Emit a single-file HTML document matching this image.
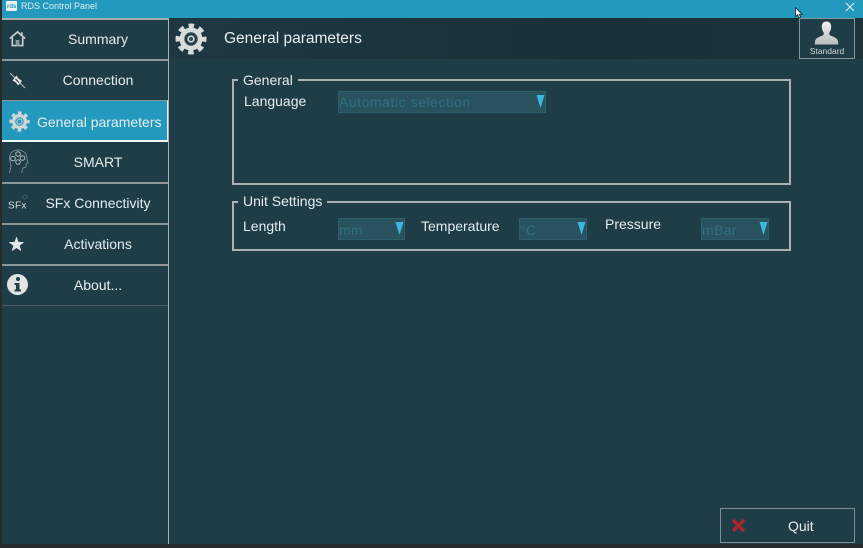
<!DOCTYPE html>
<html><head><meta charset="utf-8"><style>
html,body{margin:0;padding:0;width:863px;height:548px;overflow:hidden;background:#262b2d}
body{position:relative;font-family:"Liberation Sans",sans-serif}
div,span,svg{position:absolute;display:block}
.t{white-space:nowrap;color:#e6eced;font-size:14px;line-height:16px}
.c{text-align:center}
.sep{left:2px;width:166px;height:2px;background:#8d9799}
.dd{background:#28525e;border:1px solid #2c5e6b;box-sizing:border-box;height:22px}
.dd span{color:#316f80;font-size:14px;line-height:16px;left:0;top:3px;white-space:nowrap;letter-spacing:.3px}
.dd svg{right:0;top:3px}
.box{border:2px solid #aab2b4;box-sizing:border-box}
.leg{background:#1f3d47;padding:0 5px;color:#e6eced;font-size:14px;line-height:16px;white-space:nowrap}
</style></head><body>
<div style="left:2px;top:0;width:861px;height:544px;background:#1f3d47"></div>
<div style="left:2px;top:0;width:861px;height:18px;background:#2399bd"></div>
<div style="left:6px;top:1px;width:11px;height:10px;background:#eef3f5;border-radius:1px"></div>
<div style="left:7px;top:4px;font-size:6px;line-height:6px;font-weight:bold;color:#2399bd">rds</div>
<div class="t" style="left:21px;top:0;font-size:9px;line-height:13px;color:#dcecf2">RDS Control Panel</div>
<svg style="left:845px;top:2px" width="10" height="10" viewBox="0 0 10 10"><path d="M1 1L9 9M9 1L1 9" stroke="#e8f3f7" stroke-width="1"/></svg>

<!-- header -->
<div style="left:169px;top:18px;width:694px;height:41px;background:linear-gradient(90deg,#1e3842,#1a3038 60%,#1c333b)"></div>
<svg style="left:175px;top:23px" width="32" height="32" viewBox="0 0 32 32">
<circle cx="16" cy="16" r="13" fill="none" stroke="#d8dbdb" stroke-width="5" stroke-dasharray="5.4 4.8" stroke-dashoffset="2.700"/>
<circle cx="16" cy="16" r="8.500" fill="none" stroke="#d8dbdb" stroke-width="6"/>
<circle cx="16" cy="16" r="6" fill="none" stroke="#2c444d" stroke-width="1.400"/>
<circle cx="16" cy="16" r="3.800" fill="#c9cdce"/><circle cx="16" cy="16" r="2" fill="#33484f"/>
</svg>
<div class="t" style="left:224px;top:30px;font-size:15.500px;line-height:18px;color:#e8edee">General parameters</div>

<!-- user -->
<div style="left:799px;top:18px;width:56px;height:41px;box-sizing:border-box;border:1px solid #87979b;background:#1f3d47"></div>
<svg style="left:814px;top:21px" width="25" height="24" viewBox="0 0 25 24">
<defs><linearGradient id="u" x1="0" y1="0" x2="0" y2="1"><stop offset="0" stop-color="#f2f2f2"/><stop offset="1" stop-color="#b9bdbd"/></linearGradient></defs>
<path d="M12.500 0.500C8.900 0.500 7.600 3.300 7.800 6.300C8 9 9 10.700 9.700 11.700C10 13.200 9.400 14.200 7.500 15C4.500 16.200 1.700 17 1 20.500L0.700 23.500L24.300 23.500L24 20.500C23.300 17 20.500 16.200 17.500 15C15.600 14.200 15 13.200 15.300 11.700C16 10.700 17 9 17.200 6.300C17.400 3.300 16.100 0.500 12.500 0.500Z" fill="url(#u)"/></svg>
<div class="t c" style="left:799px;top:45px;width:56px;font-size:8.500px;line-height:12px;color:#d0d6d6">Standard</div>

<!-- sidebar -->
<div style="left:168px;top:18px;width:1px;height:526px;background:#a9b1b2"></div>
<div class="sep" style="top:18px;background:#a5adae"></div>
<div class="sep" style="top:59px"></div>
<div style="left:2px;top:100px;width:166px;height:42px;background:#2399bd;box-sizing:border-box;border-top:1px solid #8d9799;border-bottom:2px solid #f3f6f7;border-right:1px solid #e6eef0"></div>
<div class="sep" style="top:182px"></div>
<div class="sep" style="top:223px"></div>
<div class="sep" style="top:264px"></div>
<div class="sep" style="top:305px;height:1px;background:#4d5f64"></div>

<div class="t c" style="left:28px;top:31px;width:140px">Summary</div>
<div class="t c" style="left:28px;top:72px;width:140px">Connection</div>
<div class="t c" style="left:37px;top:114px;width:124px;font-size:14px">General parameters</div>
<div class="t c" style="left:28px;top:154px;width:140px">SMART</div>
<div class="t c" style="left:28px;top:195px;width:140px">SFx Connectivity</div>
<div class="t c" style="left:28px;top:236px;width:140px">Activations</div>
<div class="t c" style="left:28px;top:277px;width:140px">About...</div>

<!-- home -->
<svg style="left:9px;top:30px" width="17" height="17" viewBox="0 0 18 18"><path d="M1 9L9 2L17 9M3.500 8V16.500H14.500V8" fill="none" stroke="#c9cecf" stroke-width="1.800"/><rect x="7" y="10.500" width="4" height="6" fill="#8e9a9d"/><rect x="12.500" y="2.500" width="2" height="4" fill="#c9cecf"/></svg>
<!-- plug -->
<svg style="left:9px;top:72px" width="17" height="17" viewBox="0 0 17 17"><path d="M1 1L6 6M11 11L16 16" stroke="#b9bfc0" stroke-width="1"/><path d="M3.500 8.500L7.500 3.500L9.500 6.500L13 9L9 13.500L7 10.500Z" fill="#e6e8e8"/><path d="M6.500 7L10 10.500" stroke="#26434c" stroke-width="1.200"/></svg>
<!-- active gear -->
<svg style="left:9px;top:111px" width="21" height="21" viewBox="0 0 32 32">
<circle cx="16" cy="16" r="13" fill="none" stroke="#cdd6d8" stroke-width="5" stroke-dasharray="5.400 4.800" stroke-dashoffset="2.700"/>
<circle cx="16" cy="16" r="9" fill="none" stroke="#cdd6d8" stroke-width="5"/>
<circle cx="16" cy="16" r="4" fill="#2399bd" stroke="#b4c2c6" stroke-width="2"/></svg>
<!-- smart head -->
<svg style="left:7px;top:149px" width="22" height="25" viewBox="0 0 22 25" fill="none" stroke="#73878c" stroke-width="1"><path d="M3 12C1 6 5 1 11 1C17 1 20 5 20 10L21 14L19 15V18L16 19L14.500 24M3 12L4 17L2.500 24"/><circle cx="11" cy="5" r="2.300" stroke="#b0babc"/><circle cx="6" cy="9.500" r="2.300" stroke="#b0babc"/><circle cx="15.500" cy="9" r="2.300" stroke="#b0babc"/><circle cx="11" cy="13" r="2.300" stroke="#b0babc"/></svg>
<!-- sfx -->
<div class="t" style="left:8px;top:198px;font-size:10px;line-height:12px;letter-spacing:.3px;color:#d5dadb;margin-top:0.500px;transform:translateY(1.500px)">SFx</div>
<svg style="left:22px;top:194px" width="6" height="6" viewBox="0 0 6 6"><circle cx="3" cy="3" r="2" fill="none" stroke="#3f5a61" stroke-width="1"/></svg>
<!-- star -->
<svg style="left:8px;top:236px" width="17" height="16" viewBox="0 0 17 16"><path d="M8.500 0.500L10.500 5.900L16.300 6.100L11.700 9.600L13.300 15.200L8.500 12L3.700 15.200L5.300 9.600L0.700 6.100L6.500 5.900Z" fill="#e4e7e7"/></svg>
<!-- info -->
<svg style="left:7px;top:274px" width="21" height="21" viewBox="0 0 21 21"><circle cx="10.500" cy="10.500" r="10.500" fill="#e2e4e4"/><circle cx="11" cy="5" r="2" fill="#253f48"/><path d="M7.500 9H12.500V15.500H14V17.500H7.500V15.500H9V11H7.500Z" fill="#253f48"/></svg>

<!-- General box -->
<div class="box" style="left:232px;top:79px;width:559px;height:106px"></div>
<div class="leg" style="left:238px;top:72px">General</div>
<div class="t" style="left:244px;top:93px">Language</div>
<div class="dd" style="left:338px;top:91px;width:208px">
<span style="letter-spacing:.55px;top:2px">Automatic selection</span>
<svg width="9" height="15" viewBox="0 0 9 15" style="right:0;top:2px"><path d="M0.500 1H8.500L4.500 14Z" fill="#3cb8dc"/></svg></div>

<!-- Unit box -->
<div class="box" style="left:232px;top:201px;width:559px;height:50px"></div>
<div class="leg" style="left:238px;top:193px">Unit Settings</div>
<div class="t" style="left:243px;top:218px">Length</div>
<div class="dd" style="left:338px;top:218px;width:67px"><span style="top:3px">mm</span>
<svg width="9" height="15" viewBox="0 0 9 15" style="right:0;top:2px"><path d="M0.500 1H8.500L4.500 14Z" fill="#3cb8dc"/></svg></div>
<div class="t" style="left:421px;top:218px">Temperature</div>
<div class="dd" style="left:519px;top:218px;width:68px"><span style="top:3px">°C</span>
<svg width="9" height="15" viewBox="0 0 9 15" style="right:0;top:2px"><path d="M0.500 1H8.500L4.500 14Z" fill="#3cb8dc"/></svg></div>
<div class="t" style="left:605px;top:216px">Pressure</div>
<div class="dd" style="left:701px;top:218px;width:68px"><span style="top:3px">mBar</span>
<svg width="9" height="15" viewBox="0 0 9 15" style="right:0;top:2px"><path d="M0.500 1H8.500L4.500 14Z" fill="#3cb8dc"/></svg></div>

<!-- Quit -->
<div style="left:720px;top:508px;width:135px;height:35px;box-sizing:border-box;border:1px solid #7f8f93"></div>
<svg style="left:731px;top:518px" width="15" height="15" viewBox="0 0 15 15"><path d="M2 2L13 13M13 2L2 13" stroke="#a8262c" stroke-width="3.500"/></svg>
<div class="t" style="left:788px;top:518px">Quit</div>

<!-- cursor -->
<svg style="left:795px;top:7px" width="8" height="12" viewBox="0 0 8 12"><path d="M0.500 0.500V9.500L2.700 7.700L4.200 11L5.700 10.300L4.300 7.200H7Z" fill="#f4f4f4" stroke="#111" stroke-width=".7"/></svg>
</body></html>
